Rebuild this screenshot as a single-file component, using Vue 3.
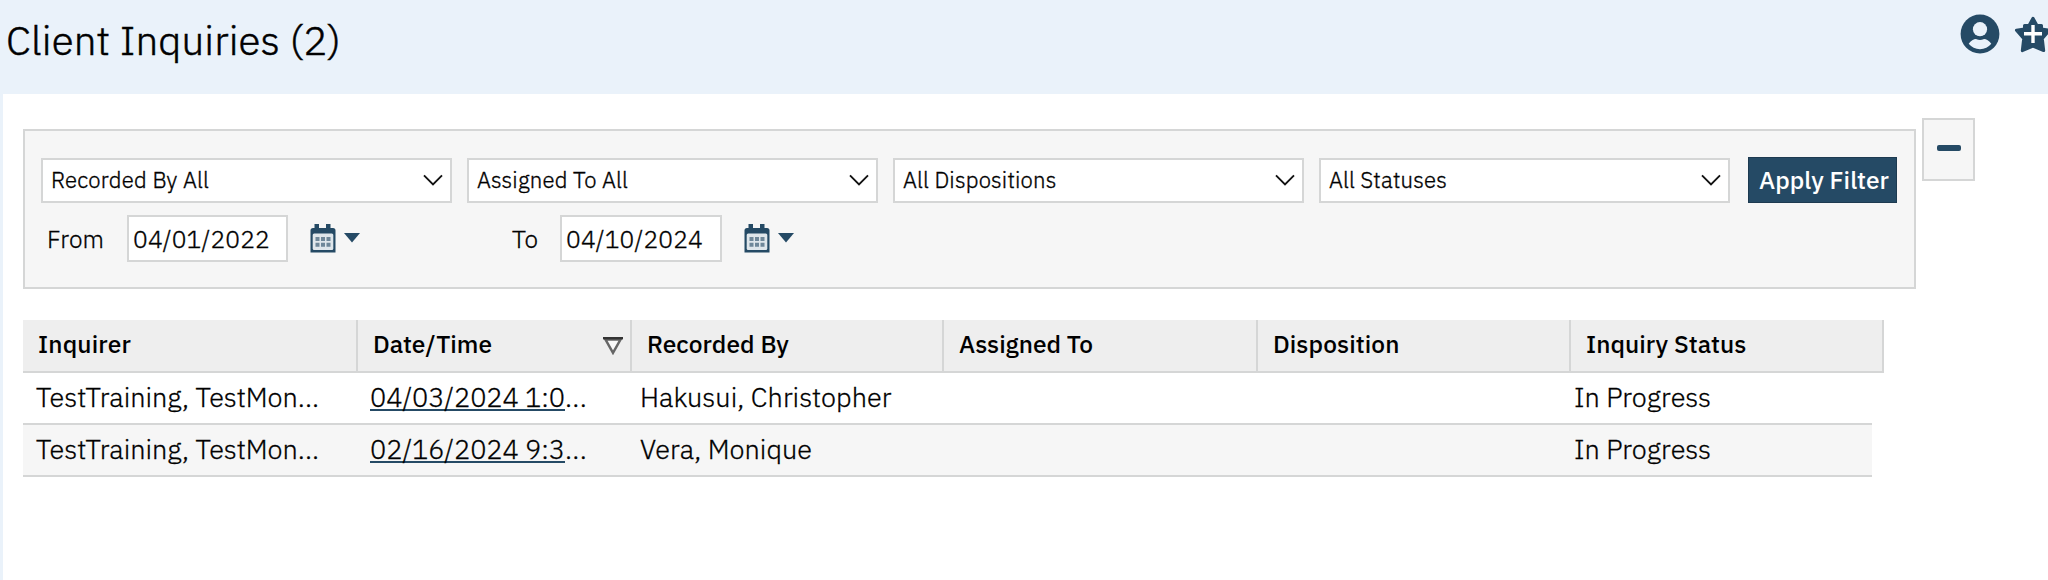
<script setup>
const selects = [
  { label: 'Recorded By All', width: 158 },
  { label: 'Assigned To All', width: 151 },
  { label: 'All Dispositions', width: 153.5 },
  { label: 'All Statuses', width: 118 },
]

const dates = [
  { label: 'From', labelWidth: 57, value: '04/01/2022', cls: 'from' },
  { label: 'To', labelWidth: 26, value: '04/10/2024', cls: 'to' },
]

const columns = [
  { title: 'Inquirer', width: 93 },
  { title: 'Date/Time', width: 119, sorted: true },
  { title: 'Recorded By', width: 142 },
  { title: 'Assigned To', width: 134 },
  { title: 'Disposition', width: 126.5 },
  { title: 'Inquiry Status', width: 160.5 },
]

const rows = [
  { inquirer: 'TestTraining, TestMon...', date: '04/03/2024 1:0', by: 'Hakusui, Christopher', byWidth: 251.5, status: 'In Progress' },
  { inquirer: 'TestTraining, TestMon...', date: '02/16/2024 9:3', by: 'Vera, Monique', byWidth: 172, status: 'In Progress' },
]

// Tracks the text of an element out to the given width in pixels.
const vFit = {
  mounted(el, { value }) {
    const natural = el.getBoundingClientRect().width
    el.style.letterSpacing = `${(value - natural) / el.textContent.length}px`
  },
}
</script>

<template>
  <div class="page">
    <header class="top">
      <h1><span v-fit="335">Client Inquiries (2)</span></h1>
      <div class="actions">
        <svg class="person" viewBox="0 0 40 40">
          <circle cx="20" cy="20" r="19.4" fill="#254a65" />
          <circle cx="20" cy="15.2" r="7.1" fill="#eaf2fa" />
          <path d="M8.7 29.8C11 26 15.200 24.600 16.500 25.200Q20 26.800 23.500 25.200C24.800 24.600 29 26 31.300 29.800C28.500 33.300 24.500 35.200 20 35.200S11.500 33.300 8.700 29.800Z" fill="#eaf2fa" />
        </svg>
        <svg class="star" viewBox="0 0 38 38">
          <path d="M19 2.200L23 9.500H27.500V13L35.500 14.200L28.300 22.600L29.700 34.600L19 30L8.300 34.600L9.700 22.600L2.500 14.200L10.500 13V9.500H15Z" fill="#254a65" stroke="#254a65" stroke-width="3" stroke-linejoin="round" />
          <path d="M19 9V27M10 17.700H28" stroke="#fff" stroke-width="3.400" />
        </svg>
      </div>
    </header>

    <main class="content">
      <div class="filter-row">
        <section class="filter">
          <div class="selects">
            <div v-for="s in selects" :key="s.label" class="select">
              <span v-fit="s.width">{{ s.label }}</span>
              <svg class="chevron" viewBox="0 0 20 12"><path d="M1 1.300L10 10.300L19 1.300" fill="none" stroke="#111" stroke-width="1.900" /></svg>
            </div>
            <button class="apply"><span v-fit="130">Apply Filter</span></button>
          </div>
          <div class="dates">
            <div v-for="d in dates" :key="d.label" class="date" :class="d.cls">
              <label><span v-fit="d.labelWidth">{{ d.label }}</span></label>
              <div class="input"><span v-fit="137">{{ d.value }}</span></div>
              <svg class="calendar" viewBox="0 0 26 29">
                <path d="M4.500 0H9V4H16V0H20.500V4H23Q25.500 4 25.500 6.500V28.500H.500V6.500Q.500 4 3 4H4.500Z" fill="#254a65" />
                <rect x="2.700" y="9.500" width="20.600" height="16.500" rx="1.500" fill="#dfe6eb" />
                <path d="M5.500 15H20.500M5.500 20.700H20.500" stroke="#6f8799" stroke-width="4" stroke-dasharray="4 1.500" />
              </svg>
              <svg class="caret" viewBox="0 0 16 10"><path d="M0 0H16L8 9.500Z" fill="#254a65" /></svg>
            </div>
          </div>
        </section>
        <button class="collapse"><i></i></button>
      </div>

      <div class="table">
        <div class="thead">
          <div v-for="c in columns" :key="c.title" class="th">
            <span v-fit="c.width">{{ c.title }}</span>
            <svg v-if="c.sorted" class="sort" viewBox="0 0 20 18"><path d="M2.500 2.500H17.500L10 15.800Z" fill="#f8f8f8" stroke="#666" stroke-width="2.500" /><path d="M0 1.200H20" stroke="#333" stroke-width="2.400" /></svg>
          </div>
        </div>
        <div v-for="r in rows" :key="r.by" class="tr">
          <div class="td"><span v-fit="283">{{ r.inquirer }}</span></div>
          <div class="td"><a v-fit="195">{{ r.date }}</a><span v-fit="22">...</span></div>
          <div class="td"><span v-fit="r.byWidth">{{ r.by }}</span></div>
          <div class="td"></div>
          <div class="td"></div>
          <div class="td"><span v-fit="137">{{ r.status }}</span></div>
        </div>
      </div>
    </main>
  </div>
</template>

<style>
body {
  overflow: hidden;
}
</style>

<style scoped>
.page {
  width: 2048px;
  height: 580px;
  overflow: hidden;
  box-sizing: border-box;
  background: #eaf2fa;
  padding-left: 3px;
  font-family: "IBM Plex Sans", Roboto, "Noto Sans", sans-serif;
  color: #000;
}
.page * {
  box-sizing: border-box;
}
span,
a {
  white-space: nowrap;
}
.top {
  height: 94px;
  display: flex;
  justify-content: space-between;
}
h1 {
  margin: 0;
  padding-left: 3px;
  font-size: 40.3px;
  font-weight: 300;
  -webkit-text-stroke: 0.5px #000;
  line-height: 81px;
}
.actions {
  display: flex;
  flex: none;
  gap: 14px;
  padding-top: 14px;
  margin-right: -4px;
}
.person {
  width: 40px;
  height: 40px;
}
.star {
  width: 38px;
  height: 38px;
  margin-top: 2px;
}
.content {
  height: 486px;
  background: #fff;
  padding: 24px 0 0 20px;
}
.filter-row {
  display: flex;
  gap: 6px;
}
.filter {
  width: 1893px;
  height: 160px;
  margin-top: 11px;
  border: 2px solid #d5d6d6;
  background: #f6f6f6;
  padding: 27px 0 0 16px;
}
.selects {
  display: flex;
  gap: 15px;
}
.select {
  width: 411px;
  height: 45px;
  border: 2px solid #d5d6d6;
  background: #fff;
  padding: 0 7px 2px 8px;
  display: flex;
  align-items: center;
  justify-content: space-between;
  font-size: 22.2px;
  font-weight: 300;
  -webkit-text-stroke: 0.35px #000;
}
.chevron {
  width: 20px;
  height: 12px;
}
.apply {
  width: 149px;
  height: 46px;
  margin: -1px 0 0 3px;
  border: 1px solid #1d3a50;
  background: #254a65;
  color: #fff;
  font-family: inherit;
  font-size: 24.5px;
  font-weight: 500;
  line-height: 44px;
  padding: 0 0 0 10px;
  text-align: left;
}
.dates {
  display: flex;
  margin-top: 12px;
}
.date {
  display: flex;
  height: 47px;
}
.from {
  padding-left: 6px;
}
.to {
  padding-left: 152px;
}
.date label {
  font-size: 24.5px;
  font-weight: 300;
  -webkit-text-stroke: 0.3px #000;
  line-height: 48px;
}
.from label {
  width: 80px;
}
.to label {
  width: 48px;
}
.input {
  width: 161px;
  border: 2px solid #d5d6d6;
  background: #fff;
  padding-left: 4px;
  font-size: 24.5px;
  font-weight: 300;
  -webkit-text-stroke: 0.35px #000;
  line-height: 44px;
}
.to .input {
  width: 162px;
}
.calendar {
  width: 26px;
  height: 29px;
  margin: 9px 0 0 22px;
}
.caret {
  width: 16px;
  height: 10px;
  margin: 18px 0 0 8px;
}
.collapse {
  width: 53px;
  height: 63px;
  border: 2px solid #d5d6d6;
  background: #f6f6f6;
  padding: 0;
  display: flex;
  align-items: center;
  justify-content: center;
}
.collapse i {
  width: 24px;
  height: 6px;
  border-radius: 2px;
  background: #254a65;
  margin-top: -3px;
}
.table {
  margin-top: 31px;
}
.thead,
.tr {
  display: grid;
}
.thead {
  width: 1861px;
  height: 53px;
  grid-template-columns: 335px 274px 312px 314px 313px 313px;
}
.th {
  background: #eee;
  border-right: 2px solid #d5d6d6;
  border-bottom: 2px solid #d5d6d6;
  padding: 0 7px 4px 15px;
  display: flex;
  align-items: center;
  justify-content: space-between;
  font-size: 24.5px;
  font-weight: 500;
}
.sort {
  width: 20px;
  height: 18px;
  margin-top: 5px;
}
.tr {
  width: 1849px;
  height: 52px;
  border-bottom: 2px solid #d5d6d6;
  font-size: 27.1px;
  font-weight: 300;
  -webkit-text-stroke: 0.3px #000;
  line-height: 47px;
  grid-template-columns: 334px 270px 313px 313px 308px 311px;
  padding-left: 13px;
}
.tr:nth-child(odd) {
  background: #f6f6f6;
}
.td a {
  text-decoration: underline;
  text-decoration-color: #254a65;
  text-decoration-thickness: 2px;
  text-underline-offset: 2px;
  text-decoration-skip-ink: none;
}
</style>
